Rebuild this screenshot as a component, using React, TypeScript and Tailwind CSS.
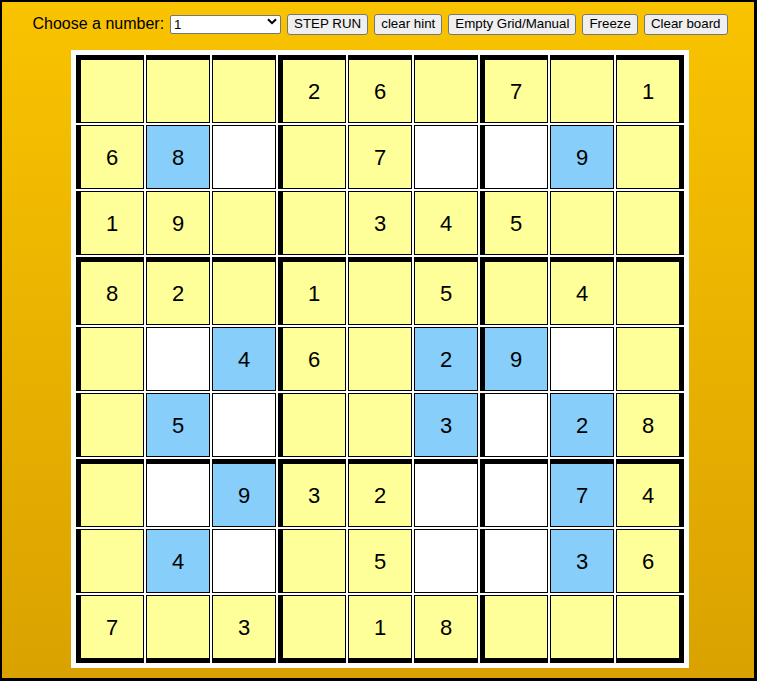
import * as React from "react";

type Cell = { v: string; c: "y" | "w" | "b" };

// rows of the board: value ("" = empty) and colour (yellow / white / blue)
const ROWS: string[] = [
  ". . . 2 6 . 7 . 1|y y y y y y y y y",
  "6 8 . . 7 . . 9 .|y b w y y w w b y",
  "1 9 . . 3 4 5 . .|y y y y y y y y y",
  "8 2 . 1 . 5 . 4 .|y y y y y y y y y",
  ". . 4 6 . 2 9 . .|y w b y y b b w y",
  ". 5 . . . 3 . 2 8|y b w y y b w b y",
  ". . 9 3 2 . . 7 4|y w b y y w w b y",
  ". 4 . . 5 . . 3 6|y b w y y w w b y",
  "7 . 3 . 1 8 . . .|y y y y y y y y y",
];

const board: Cell[][] = ROWS.map((r) => {
  const [vals, cols] = r.split("|");
  const v = vals.split(" ");
  const c = cols.split(" ");
  return v.map((x, i) => ({ v: x === "." ? "" : x, c: c[i] as Cell["c"] }));
});

const BUTTONS = ["STEP RUN", "clear hint", "Empty Grid/Manual", "Freeze", "Clear board"];

function SudokuCell({ cell, row, col }: { cell: Cell; row: number; col: number }) {
  const bg =
    cell.c === "b" ? "bg-[#87cefa]" : cell.c === "w" ? "bg-white" : "bg-[#ffff99]";
  return (
    <div
      className={[
        "box-content w-[62px] h-[62px] border border-black flex items-center justify-center text-[22px] text-black",
        bg,
        col % 3 === 0 ? "border-l-[5px]" : "",
        row % 3 === 0 ? "border-t-[5px]" : "",
        col === 8 ? "border-r-[5px]" : "",
        row === 8 ? "border-b-[5px]" : "",
      ].join(" ")}
    >
      {cell.v}
    </div>
  );
}

export default function App() {
  const [num, setNum] = React.useState("1");
  return (
    <div
      className="w-[757px] h-[681px] overflow-hidden border-l-2 border-t-2 border-r-[3px] border-b-[3px] border-black bg-gradient-to-b from-[#f9c300] to-[#daa200] pl-[4px] pt-[11px] flex flex-col items-center"
      style={{ fontFamily: '"Liberation Sans", Arial, sans-serif' }}
    >
      <div className="flex items-center h-[22px] gap-[6px] text-black">
        <span className="text-[16px] leading-none">Choose a number:</span>
        <div className="relative">
          <select
            value={num}
            onChange={(e) => setNum(e.target.value)}
            className="appearance-none w-[111px] h-[19px] bg-white border border-[#767676] rounded-[2px] pl-[3px] text-[13.333px] leading-none text-black outline-none"
          >
            {["1", "2", "3", "4", "5", "6", "7", "8", "9"].map((n) => (
              <option key={n} value={n}>
                {n}
              </option>
            ))}
          </select>
          <svg
            className="absolute right-[4px] top-[6px] pointer-events-none"
            width="10"
            height="7"
            viewBox="0 0 10 7"
          >
            <path d="M1 1.2 L5 5.2 L9 1.2" fill="none" stroke="#000" strokeWidth="2" />
          </svg>
        </div>
        {BUTTONS.map((b) => (
          <button
            key={b}
            className="h-[21px] px-[6px] bg-[#efefef] border border-[#767676] rounded-[3px] text-[13.333px] leading-none text-black"
          >
            {b}
          </button>
        ))}
      </div>

      <div className="mt-[15px] w-fit grid grid-cols-[repeat(9,auto)] gap-[2px] p-[5px] bg-white">
        {board.map((row, r) =>
          row.map((cell, c) => <SudokuCell key={`${r}-${c}`} cell={cell} row={r} col={c} />)
        )}
      </div>
    </div>
  );
}
